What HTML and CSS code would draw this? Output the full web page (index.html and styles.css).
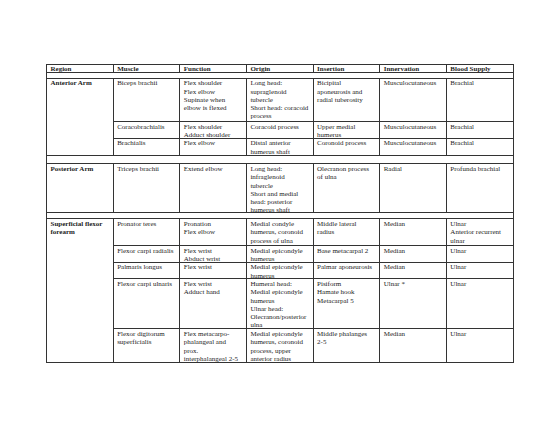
FILE: index.html
```html
<!DOCTYPE html>
<html>
<head>
<meta charset="utf-8">
<link rel="stylesheet" href="styles.css">
</head>
<body>
<div class="table">
  <div class="cell head">Region</div>
  <div class="cell head">Muscle</div>
  <div class="cell head">Function</div>
  <div class="cell head">Origin</div>
  <div class="cell head">Insertion</div>
  <div class="cell head">Innervation</div>
  <div class="cell head">Blood Supply</div>

  <div class="cell spacer"></div>

  <div class="cell region span3">Anterior Arm</div>
  <div class="cell">Biceps brachii</div>
  <div class="cell">Flex shoulder<br>Flex elbow<br>Supinate when<br>elbow is flexed</div>
  <div class="cell">Long head:<br>supraglenoid<br>tubercle<br>Short head: coracoid<br>process</div>
  <div class="cell">Bicipital<br>aponeurosis and<br>radial tuberosity</div>
  <div class="cell">Musculocutaneous</div>
  <div class="cell">Brachial</div>

  <div class="cell">Coracobrachialis</div>
  <div class="cell">Flex shoulder<br>Adduct shoulder</div>
  <div class="cell">Coracoid process</div>
  <div class="cell">Upper medial<br>humerus</div>
  <div class="cell">Musculocutaneous</div>
  <div class="cell">Brachial</div>

  <div class="cell">Brachialis</div>
  <div class="cell">Flex elbow</div>
  <div class="cell">Distal anterior<br>humerus shaft</div>
  <div class="cell">Coronoid process</div>
  <div class="cell">Musculocutaneous</div>
  <div class="cell">Brachial</div>

  <div class="cell spacer"></div>

  <div class="cell region">Posterior Arm</div>
  <div class="cell">Triceps brachii</div>
  <div class="cell">Extend elbow</div>
  <div class="cell">Long head:<br>infraglenoid<br>tubercle<br>Short and medial<br>head: posterior<br>humerus shaft</div>
  <div class="cell">Olecranon process<br>of ulna</div>
  <div class="cell">Radial</div>
  <div class="cell">Profunda brachial</div>

  <div class="cell spacer"></div>

  <div class="cell region span5 wrap">Superficial flexor forearm</div>
  <div class="cell">Pronator teres</div>
  <div class="cell">Pronation<br>Flex elbow</div>
  <div class="cell">Medial condyle<br>humerus, coronoid<br>process of ulna</div>
  <div class="cell">Middle lateral<br>radius</div>
  <div class="cell">Median</div>
  <div class="cell">Ulnar<br>Anterior recurrent<br>ulnar</div>

  <div class="cell">Flexor carpi radialis</div>
  <div class="cell">Flex wrist<br>Abduct wrist</div>
  <div class="cell">Medial epicondyle<br>humerus</div>
  <div class="cell">Base metacarpal 2</div>
  <div class="cell">Median</div>
  <div class="cell">Ulnar</div>

  <div class="cell">Palmaris longus</div>
  <div class="cell">Flex wrist</div>
  <div class="cell">Medial epicondyle<br>humerus</div>
  <div class="cell">Palmar aponeurosis</div>
  <div class="cell">Median</div>
  <div class="cell">Ulnar</div>

  <div class="cell">Flexor carpi ulnaris</div>
  <div class="cell">Flex wrist<br>Adduct hand</div>
  <div class="cell">Humeral head:<br>Medial epicondyle<br>humerus<br>Ulnar head:<br>Olecranon/posterior<br>ulna</div>
  <div class="cell">Pisiform<br>Hamate hook<br>Metacarpal 5</div>
  <div class="cell">Ulnar *</div>
  <div class="cell">Ulnar</div>

  <div class="cell">Flexor digitorum<br>superficialis</div>
  <div class="cell">Flex metacarpo-<br>phalangeal and<br>prox.<br>interphalangeal 2-5</div>
  <div class="cell">Medial epicondyle<br>humerus, coronoid<br>process, upper<br>anterior radius</div>
  <div class="cell">Middle phalanges<br>2-5</div>
  <div class="cell">Median</div>
  <div class="cell">Ulnar</div>
</div>
</body>
</html>
```

FILE: styles.css
```css
html, body {
  margin: 0;
  padding: 0;
  background: #ffffff;
}

body {
  font-family: "Liberation Serif", "Times New Roman", serif;
  font-size: 7px;
  color: #1c1c1c;
}

.table {
  box-sizing: border-box;
  margin: 63.5px 0 0 46px;
  width: 467.5px;
  display: grid;
  grid-template-columns: repeat(7, 1fr);
  grid-template-rows: 8.7px 5.6px 43.7px 16.3px 17.2px 8.5px 49px 6px 27px 16.3px 16.7px 50px 33.3px;
  border-top: 1px solid #333;
  border-left: 1px solid #333;
}

.cell {
  box-sizing: border-box;
  border-right: 1px solid #333;
  border-bottom: 1px solid #333;
  padding: 0.5px 1px 0 3.5px;
  line-height: 8.3px;
  white-space: nowrap;
  min-width: 0;
}

.head,
.region {
  font-weight: bold;
}

.wrap {
  white-space: normal;
}

.spacer {
  grid-column: 1 / -1;
  padding: 0;
}

.span3 {
  grid-row: span 3;
}

.span5 {
  grid-row: span 5;
}
```
